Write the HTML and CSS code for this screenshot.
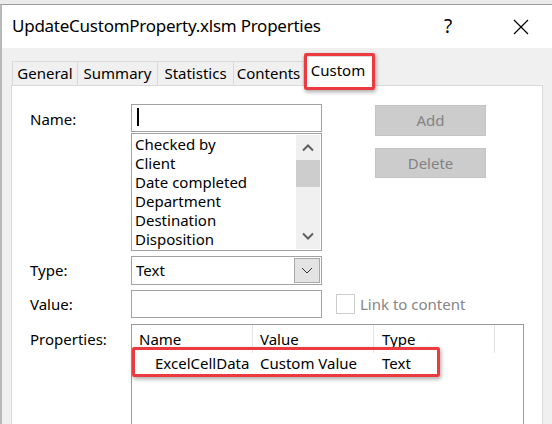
FILE: index.html
```html
<!DOCTYPE html>
<html>
<head>
<meta charset="utf-8">
<link rel="stylesheet" href="styles.css">
</head>
<body>
<div class="window">
  <div class="titlebar">
    <span class="title">UpdateCustomProperty.xlsm Properties</span>
    <span class="help">?</span>
    <span class="close"><svg width="16" height="16" viewBox="0 0 16 16"><path d="M1 1 L15 15 M15 1 L1 15" stroke="#000" stroke-width="1.2" fill="none"/></svg></span>
  </div>
  <div class="body">
    <div class="tabs">
      <div class="tab t-general">General</div>
      <div class="tab t-summary">Summary</div>
      <div class="tab t-stats">Statistics</div>
      <div class="tab t-contents">Contents</div>
      <div class="tab active t-custom">Custom</div>
    </div>
    <div class="panel">
      <div class="row row-name">
        <div class="lbl lbl-name">Name:</div>
        <div class="ctrl-col">
          <div class="field name-field"><span class="caret"></span></div>
          <div class="listbox">
            <ul class="items">
              <li>Checked by</li>
              <li>Client</li>
              <li>Date completed</li>
              <li>Department</li>
              <li>Destination</li>
              <li>Disposition</li>
            </ul>
            <div class="scrollbar">
              <div class="sb-arrow"><svg width="14" height="9" viewBox="0 0 14 9"><path d="M2 7.5 L7 2.5 L12 7.5" stroke="#606060" stroke-width="2" fill="none"/></svg></div>
              <div class="sb-thumb"></div>
              <div class="sb-space"></div>
              <div class="sb-arrow"><svg width="14" height="9" viewBox="0 0 14 9"><path d="M2 1.5 L7 6.5 L12 1.5" stroke="#606060" stroke-width="2" fill="none"/></svg></div>
            </div>
          </div>
        </div>
        <div class="btn-col">
          <div class="btn btn-add">Add</div>
          <div class="btn btn-delete">Delete</div>
        </div>
      </div>
      <div class="row row-type">
        <div class="lbl">Type:</div>
        <div class="combo">
          <span class="combo-text">Text</span>
          <span class="combo-btn"><svg width="12" height="7" viewBox="0 0 12 7"><path d="M1 1 L6 6 L11 1" stroke="#333" stroke-width="1" fill="none"/></svg></span>
        </div>
      </div>
      <div class="row row-value">
        <div class="lbl">Value:</div>
        <div class="field value-field"></div>
        <span class="checkbox"></span>
        <span class="check-label">Link to content</span>
      </div>
      <div class="row row-props">
        <div class="lbl lbl-props">Properties:</div>
        <div class="listview">
          <div class="lv-header">
            <span class="col col-name">Name</span>
            <span class="col col-value">Value</span>
            <span class="col col-type">Type</span>
          </div>
          <div class="lv-row">
            <span class="cell cell-name">ExcelCellData</span>
            <span class="cell cell-value">Custom Value</span>
            <span class="cell cell-type">Text</span>
          </div>
        </div>
      </div>
    </div>
  </div>
  <div class="callout callout-tab"></div>
  <div class="callout callout-row"></div>
</div>
</body>
</html>
```
FILE: styles.css
```css
* { box-sizing: border-box; }
html, body { margin: 0; padding: 0; }
body {
  width: 552px;
  height: 424px;
  overflow: hidden;
  background: #ebebeb;
  font-family: "Noto Sans", "Segoe UI", sans-serif;
  color: #000;
}
.window {
  position: relative;
  margin-top: 4px;
  height: 420px;
  border-top: 1px solid #9c9c9c;
  border-left: 2px solid #b8b8b8;
  background: #f0f0f0;
  overflow: hidden;
}
.titlebar {
  height: 43px;
  background: #fff;
  display: flex;
  align-items: center;
  padding-left: 10px;
}
.title {
  font-size: 17px;
  letter-spacing: -0.25px;
  flex: 1;
  padding-bottom: 2px;
}
.help {
  font-size: 19px;
  width: 20px;
  text-align: center;
  margin-right: 55px;
  padding-bottom: 2px;
}
.close {
  display: flex;
  width: 16px;
  margin-right: 23px;
}
.body {
  padding-top: 13px;
}
.tabs {
  display: flex;
  align-items: flex-end;
  height: 24px;
  padding-left: 10px;
  position: relative;
  z-index: 2;
}
.tab {
  height: 24px;
  border: 1px solid #d9d9d9;
  border-bottom: none;
  margin-right: -1px;
  background: #f0f0f0;
  font-size: 15px;
  line-height: 22px;
  text-align: center;
}
.t-general { width: 66px; }
.t-summary { width: 81px; }
.t-stats { width: 77px; }
.t-contents { width: 71px; }
.t-custom { width: 70px; }
.tab.active {
  background: #fff;
  line-height: 26px;
  margin-bottom: -1px;
  height: 30px;
}
.panel {
  margin-left: 9px;
  width: 532px;
  height: 360px;
  border: 1px solid #d9d9d9;
  background: #fff;
  padding: 18px 0 0 18px;
}
.row {
  display: flex;
  align-items: flex-start;
}
.lbl {
  width: 101px;
  font-size: 15px;
  line-height: 28px;
  flex: none;
}
.lbl-name { margin-top: 1px; }
.ctrl-col {
  width: 191px;
  display: flex;
  flex-direction: column;
}
.field {
  height: 28px;
  border: 1px solid #a2a2a2;
  background: #fff;
  position: relative;
}
.name-field { width: 191px; }
.caret {
  position: absolute;
  left: 5px;
  top: 3px;
  width: 2px;
  height: 18px;
  background: #000;
}
.listbox {
  margin-top: 1px;
  height: 118px;
  border: 1px solid #a2a2a2;
  display: flex;
  padding: 1px;
}
.items {
  list-style: none;
  margin: 0;
  padding: 0 0 0 2px;
  flex: 1;
  font-size: 15px;
  line-height: 19px;
  overflow: hidden;
  white-space: nowrap;
}
.scrollbar {
  width: 24px;
  background: #f0f0f0;
  display: flex;
  flex-direction: column;
}
.sb-arrow {
  height: 25px;
  display: flex;
  align-items: center;
  justify-content: center;
}
.sb-thumb {
  height: 27px;
  background: #cdcdcd;
}
.sb-space { flex: 1; }
.btn-col {
  margin-left: 53px;
  display: flex;
  flex-direction: column;
  gap: 12px;
  padding-top: 1px;
}
.btn {
  width: 111px;
  height: 31px;
  background: #cccccc;
  border: 1px solid #c4c4c4;
  color: #838383;
  font-size: 15px;
  line-height: 28px;
  text-align: center;
}
.btn-delete { height: 30px; }
.row-type { margin-top: 5px; }
.combo {
  width: 191px;
  height: 29px;
  border: 1px solid #a2a2a2;
  display: flex;
  align-items: center;
  justify-content: space-between;
  padding: 1px;
}
.combo-text {
  font-size: 15px;
  padding-left: 3px;
  padding-bottom: 1px;
}
.combo-btn {
  width: 26px;
  height: 25px;
  background: #e3e3e3;
  border: 1px solid #a9a9a9;
  display: flex;
  align-items: center;
  justify-content: center;
}
.row-value { margin-top: 5px; align-items: center; }
.value-field { width: 191px; }
.checkbox {
  width: 19px;
  height: 20px;
  border: 1px solid #cccccc;
  margin-left: 14px;
  background: #fff;
}
.check-label {
  margin-left: 5px;
  font-size: 15px;
  color: #868686;
}
.row-props { margin-top: 6px; }
.lbl-props { line-height: 30px; }
.listview {
  width: 393px;
  height: 130px;
  border: 1px solid #9a9a9a;
}
.lv-header {
  display: flex;
  height: 28px;
}
.col {
  width: 121px;
  border-right: 1px solid #e5e5e5;
  font-size: 15px;
  line-height: 28px;
  padding-left: 7px;
}
.col-type { padding-left: 8px; }
.lv-row {
  display: flex;
  height: 20px;
  font-size: 15px;
  line-height: 20px;
}
.cell { width: 121px; padding-left: 7px; white-space: nowrap; }
.cell-name { padding-left: 23px; }
.cell-type { padding-left: 8px; }
.callout {
  position: absolute;
  border: 3px solid #ec3b40;
  border-radius: 2px;
  box-shadow: 1px 2px 4px rgba(0, 0, 0, 0.35);
  z-index: 5;
}
.callout-tab {
  left: 302px;
  top: 48px;
  width: 71px;
  height: 37px;
}
.callout-row {
  left: 130px;
  top: 342px;
  width: 308px;
  height: 30px;
}
```
